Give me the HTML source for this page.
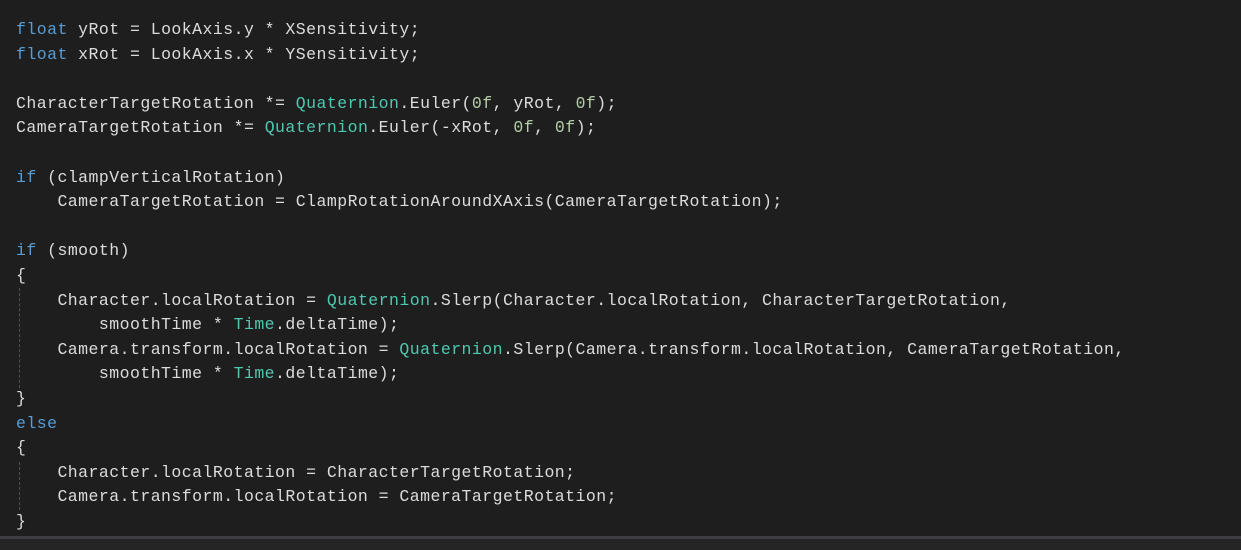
<!DOCTYPE html>
<html><head><meta charset="utf-8"><style>
html,body{margin:0;padding:0;background:#1e1e1e;width:1241px;height:550px;overflow:hidden}
pre{position:absolute;left:16px;top:18px;margin:0;font-family:"Liberation Mono",monospace;font-size:16.5px;letter-spacing:0.46px;line-height:24.6px;color:#dcdcdc}
.k{color:#569cd6}.t{color:#4ec9b0}.n{color:#b5cea8}
.g{position:absolute;left:19px;width:0;border-left:1px dashed #505050}
.bar{position:absolute;left:0;top:536px;width:1241px;height:3px;background:#3e3e42}
.bot{position:absolute;left:0;top:539px;width:1241px;height:11px;background:#252526}
</style></head><body>
<div class="g" style="top:288px;height:100px"></div>
<div class="g" style="top:462px;height:48px"></div>
<pre><span class="k">float</span> yRot = LookAxis.y * XSensitivity;
<span class="k">float</span> xRot = LookAxis.x * YSensitivity;

CharacterTargetRotation *= <span class="t">Quaternion</span>.Euler(<span class="n">0f</span>, yRot, <span class="n">0f</span>);
CameraTargetRotation *= <span class="t">Quaternion</span>.Euler(-xRot, <span class="n">0f</span>, <span class="n">0f</span>);

<span class="k">if</span> (clampVerticalRotation)
    CameraTargetRotation = ClampRotationAroundXAxis(CameraTargetRotation);

<span class="k">if</span> (smooth)
{
    Character.localRotation = <span class="t">Quaternion</span>.Slerp(Character.localRotation, CharacterTargetRotation,
        smoothTime * <span class="t">Time</span>.deltaTime);
    Camera.transform.localRotation = <span class="t">Quaternion</span>.Slerp(Camera.transform.localRotation, CameraTargetRotation,
        smoothTime * <span class="t">Time</span>.deltaTime);
}
<span class="k">else</span>
{
    Character.localRotation = CharacterTargetRotation;
    Camera.transform.localRotation = CameraTargetRotation;
}</pre>
<div class="bar"></div><div class="bot"></div>
</body></html>
